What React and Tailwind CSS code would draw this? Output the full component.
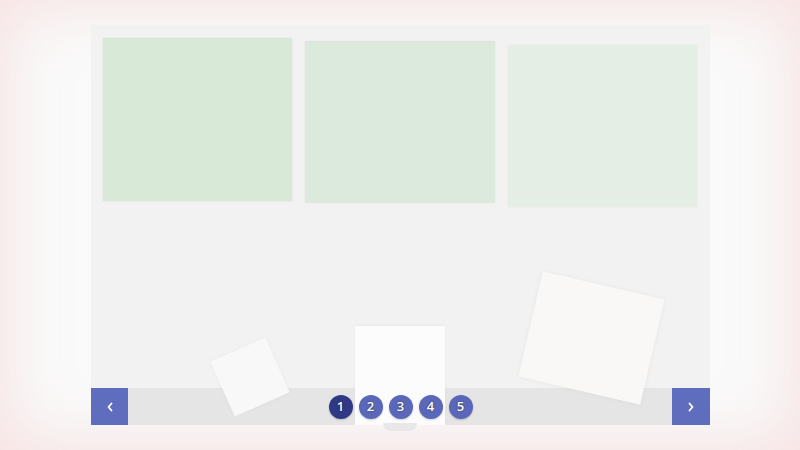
import React from "react";

function Chevron({ dir }) {
  return (
    <svg width="10" height="12" viewBox="0 0 10 12" fill="none">
      <path
        d={dir === "left" ? "M6.5 2.5 L3.5 6 L6.5 9.5" : "M3.5 2.5 L6.5 6 L3.5 9.5"}
        stroke="white"
        strokeWidth="1.8"
        strokeLinecap="round"
        strokeLinejoin="round"
      />
    </svg>
  );
}

export default function App() {
  const dots = [1, 2, 3, 4, 5];
  return (
    <div
      className="relative w-[800px] h-[450px] overflow-hidden bg-[#fafafa] shadow-[inset_0_0_70px_rgba(240,160,160,0.3)]"
      style={{ fontFamily: "'Open Sans', 'DejaVu Sans', sans-serif" }}
    >
      <div className="relative ml-[91px] pt-[25px] w-[619px]">
        <div className="relative h-[400px] bg-[#f2f2f2] flex flex-col">
          <div className="flex-1 flex items-start gap-[13px] pl-[12px]">
            <div className="mt-[13px] w-[189px] h-[163px] bg-[#d8e9d8] shadow-[0_0_2px_rgba(0,0,0,0.08)]" />
            <div className="mt-[16px] w-[190px] h-[162px] bg-[#dceadd] shadow-[0_0_2px_rgba(0,0,0,0.06)]" />
            <div className="mt-[20px] w-[189px] h-[162px] bg-[#e4eee5] shadow-[0_0_2px_rgba(0,0,0,0.05)]" />
          </div>
          <div className="h-[37px] flex bg-[#e5e5e5]">
            <div className="w-[37px] h-full bg-[#5f6dbf] flex items-center justify-center">
              <Chevron dir="left" />
            </div>
            <div className="flex-1" />
            <div className="w-[38px] h-full bg-[#5f6dbf] flex items-center justify-center">
              <Chevron dir="right" />
            </div>
          </div>

          {/* floating pieces */}
          <div className="absolute left-[264px] top-[301px] w-[90px] h-[99px] bg-[#fcfcfc] shadow-[0_-1px_3px_rgba(0,0,0,0.04)]" />
          <div className="absolute left-[292px] top-[398px] w-[34px] h-[8px] rounded-b-full bg-[#e8e8e8]" />
          <div className="absolute left-[129px] top-[322px] w-[60px] h-[60px] bg-[#f8f8f8] rotate-[-24deg] shadow-[0_0_4px_rgba(0,0,0,0.04)]" />
          <div className="absolute left-[438px] top-[259px] w-[125px] h-[108px] bg-[#f9f8f7] rotate-[13deg] shadow-[0_0_5px_rgba(0,0,0,0.05)]" />

          {/* dots */}
          <div className="absolute left-0 right-0 bottom-0 h-[37px] flex items-center justify-center gap-[6px] z-10">
            {dots.map((n) => (
              <div
                key={n}
                className={
                  "w-[24px] h-[24px] rounded-full flex items-center justify-center text-white text-[13px] font-semibold shadow-[0_1px_2px_rgba(0,0,0,0.2)] " +
                  (n === 1 ? "bg-[#2f3985]" : "bg-[#5b68b9]")
                }
                style={{ textShadow: "0 0 2px rgba(0,0,0,0.6)" }}
              >
                {n}
              </div>
            ))}
          </div>
        </div>
      </div>
    </div>
  );
}
